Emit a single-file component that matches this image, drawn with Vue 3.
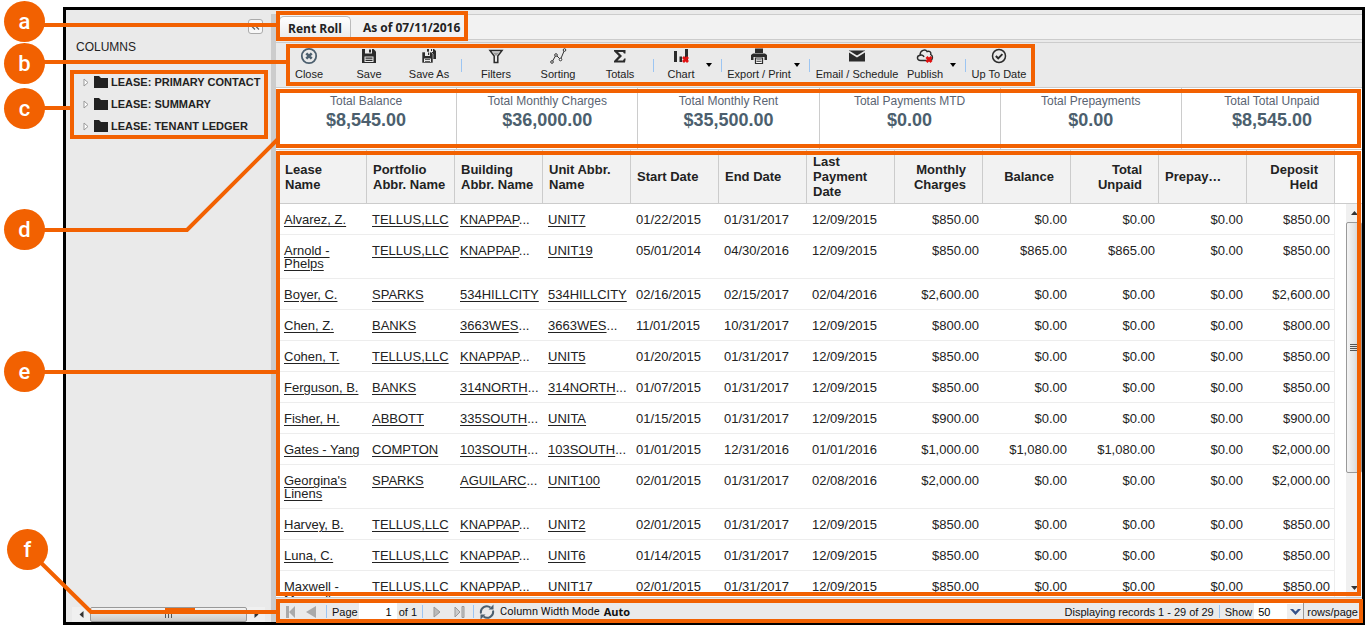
<template>
  <div class="page">
    <div class="frame">
      <aside class="sidebar">
        <button class="collapse" type="button" aria-label="Collapse columns">
          <svg width="9" height="7" viewBox="0 0 9 7"><path d="M4 0.5 1 3.5l3 3M8 0.5 5 3.5l3 3" fill="none" stroke="#666" stroke-width="1.3" /></svg>
        </button>
        <h2 class="sidebar-title">COLUMNS</h2>
        <ul class="tree">
          <li v-for="folder in folders" :key="folder">
            <svg class="twisty" width="6" height="9" viewBox="0 0 6 9"><path d="M1 1v7l4-3.5z" fill="#fff" stroke="#999" /></svg>
            <svg class="folder" width="14" height="12" viewBox="0 0 14 12"><path d="M0 0h5l2 2h7v10H0z" fill="#222" /></svg>
            <span>{{ folder }}</span>
          </li>
          <i class="callout callout-c"></i>
        </ul>
        <div class="hscroll">
          <span class="hscroll-btn"><svg width="5" height="7" viewBox="0 0 5 7"><path d="M4.500 0v7L0.500 3.500z" fill="#333" /></svg></span>
          <span class="hscroll-thumb"><b></b><b></b><b></b></span>
          <span class="hscroll-btn"><svg width="5" height="7" viewBox="0 0 5 7"><path d="M0.500 0v7l4-3.500z" fill="#333" /></svg></span>
        </div>
      </aside>

      <div class="splitter"></div>

      <main class="main">
        <nav class="tabs">
          <div class="tab-group">
            <button class="tab active" type="button">Rent Roll</button>
            <button class="tab" type="button">As of 07/11/2016</button>
            <i class="callout callout-a"></i>
          </div>
        </nav>

        <div class="toolbar">
          <div class="tools">
            <template v-for="tool in tools" :key="tool.label">
              <button class="tool" :class="tool.size" type="button">
                <svg class="tool-icon" width="18" height="18" viewBox="0 0 18 18" v-html="icons[tool.icon]"></svg>
                <span>{{ tool.label }}</span>
              </button>
              <span v-if="tool.menu" class="arrow"></span>
              <span v-if="tool.sep" class="sep"></span>
            </template>
            <i class="callout callout-b"></i>
          </div>
        </div>

        <section class="summary">
          <div v-for="item in totals" :key="item.label" class="total">
            <div class="total-label">{{ item.label }}</div>
            <div class="total-value">{{ item.value }}</div>
          </div>
          <i class="callout callout-d"></i>
        </section>

        <section class="grid">
          <div class="table-wrap">
            <table>
              <thead>
                <tr>
                  <th v-for="col in columns" :key="col.label" :class="{ num: col.num }">{{ col.label }}</th>
                </tr>
              </thead>
              <tbody>
                <tr v-for="row in rows" :key="row[0]">
                  <td v-for="(cell, i) in row" :key="i" :class="{ num: i > 6 }">
                    <template v-if="i < 4"><a href="#">{{ cell.replace('...', '') }}</a>{{ cell.endsWith('...') ? '...' : '' }}</template>
                    <template v-else>{{ cell }}</template>
                  </td>
                </tr>
              </tbody>
            </table>
          </div>
          <div class="gutter">
            <div class="gutter-head"></div>
            <div class="vscroll">
              <span class="vscroll-btn"><svg width="7" height="4" viewBox="0 0 7 4"><path d="M0 4h7L3.500 0z" fill="#333" /></svg></span>
              <span class="vscroll-thumb"><b></b><b></b><b></b><b></b></span>
              <span class="vscroll-space"></span>
              <span class="vscroll-btn"><svg width="7" height="4" viewBox="0 0 7 4"><path d="M0 0h7L3.500 4z" fill="#333" /></svg></span>
            </div>
          </div>
          <i class="callout callout-e"></i>
        </section>

        <footer class="pager">
          <button class="nav" type="button" aria-label="First page"><svg width="9" height="12" viewBox="0 0 9 12"><path d="M0 0h3v12H0zM9 0v12L3 6z" fill="#aaa" /></svg></button>
          <button class="nav nav-prev" type="button" aria-label="Previous page"><svg width="10" height="12" viewBox="0 0 10 12"><path d="M10 0v12L0 6z" fill="#aaa" /></svg></button>
          <span class="sep"></span>
          <label for="page">Page</label>
          <input id="page" v-model="page" type="text" />
          <span>of 1</span>
          <span class="sep"></span>
          <button class="nav nav-next" type="button" aria-label="Next page"><svg width="8" height="12" viewBox="0 0 8 12"><path d="M1 1v10l6-5z" fill="#bbb" stroke="#999" /></svg></button>
          <button class="nav nav-last" type="button" aria-label="Last page"><svg width="11" height="12" viewBox="0 0 11 12"><path d="M1 1v10l5-5zM8 .5h2v11H8z" fill="#ccc" stroke="#999" /></svg></button>
          <span class="sep"></span>
          <button class="nav" type="button" aria-label="Refresh">
            <svg width="16" height="16" viewBox="0 0 16 16">
              <path d="M2 9.500A6 6 0 0 1 11.500 3.500M14 6.500A6 6 0 0 1 4.500 12.500" fill="none" stroke="#4c5f6e" stroke-width="2" />
              <path d="M9.500 5.500h5V0.500zM6.500 10.500h-5v5z" fill="#4c5f6e" />
            </svg>
          </button>
          <span class="mode">Column Width Mode</span>
          <b class="auto">Auto</b>
          <span class="displaying">Displaying records 1 - 29 of 29</span>
          <span class="sep"></span>
          <label for="size">Show</label>
          <span class="size">
            <select id="size" v-model="size"><option>50</option></select>
            <svg width="16" height="16" viewBox="0 0 16 16"><path d="M3 5h3l2.500 2.500L11 5h3L8.500 11z" fill="#35518a" /></svg>
          </span>
          <span>rows/page</span>
          <i class="callout callout-f"></i>
        </footer>
      </main>
    </div>

    <svg class="connectors" width="290" height="625" viewBox="0 0 290 625">
      <g fill="none" stroke="#f26101" stroke-width="4">
        <path d="M24 25H277M24 62H287M24 108H71M24 230H187L278 139M24 372H277M27 549L91 612H277" />
      </g>
      <path d="M165 608h30v5h-30z" fill="#f26101" />
    </svg>
    <span v-for="m in markers" :key="m" class="marker" :class="'marker-' + m">{{ m }}</span>
  </div>
</template>

<script setup>
import { ref } from 'vue'

const page = ref('1')
const size = ref('50')

const markers = ['a', 'b', 'c', 'd', 'e', 'f']

const folders = ['LEASE: PRIMARY CONTACT', 'LEASE: SUMMARY', 'LEASE: TENANT LEDGER']

const tools = [
  { label: 'Close', icon: 'close', size: 'w60' },
  { label: 'Save', icon: 'save', size: 'w60' },
  { label: 'Save As', icon: 'saveAs', size: 'w60', sep: true },
  { label: 'Filters', icon: 'filter', size: 'w62' },
  { label: 'Sorting', icon: 'sort', size: 'w62' },
  { label: 'Totals', icon: 'sigma', size: 'w62', sep: true },
  { label: 'Chart', icon: 'chart', size: 'w48', menu: true, sep: true },
  { label: 'Export / Print', icon: 'print', size: 'w68', menu: true, sep: true },
  { label: 'Email / Schedule', icon: 'mail', size: 'w88' },
  { label: 'Publish', icon: 'cloud', size: 'w48', menu: true, sep: true },
  { label: 'Up To Date', icon: 'check', size: 'w60' }
]

const redX = '<path d="M9.500 10l5 5M14.500 10l-5 5" stroke="#e01010" stroke-width="2.800" fill="none"/>'

const icons = {
  close: '<circle cx="9" cy="9" r="7.200" fill="none" stroke="#4c5f6e" stroke-width="1.800"/><path d="M6.300 6.300l5.400 5.400M11.700 6.300l-5.400 5.400" stroke="#4c5f6e" stroke-width="2.600"/>',
  save: '<path d="M2 2h11.500L16 4.500V16H2z" fill="#2b2b2b"/><path d="M5 2h7v4.500H5zM4.500 9.500h9V15h-9z" fill="#eaeaea"/><path d="M9 2.500h2v3H9zM5.500 10.500h7v1.200h-7zM5.500 12.800h7V14h-7z" fill="#2b2b2b"/>',
  saveAs: '<path d="M7 2h7l2 2v8H7z" fill="#2b2b2b"/><path d="M9 2h4v3H9z" fill="#eaeaea"/><path d="M11 2h1v2h-1z" fill="#2b2b2b"/><path d="M2 5h9l2 2v9H2z" fill="#2b2b2b" stroke="#eaeaea" stroke-width=".6"/><path d="M5 5h5v4H5zM4 11.500h7V15H4z" fill="#eaeaea"/><path d="M8 5.500h1.200v2.500H8zM5 12.300h5v.8H5zM5 14h5v.8H5z" fill="#2b2b2b"/>',
  filter: '<path d="M3 3.500h12L10.800 9v6.500H7.200V9z" fill="none" stroke="#2b2b2b" stroke-width="1.500"/><path d="M5.500 5.500h7L9 9z" fill="#999"/>',
  sort: '<path d="M3 15L7 8l4.500 4.500L15.500 3" fill="none" stroke="#333" stroke-width="1"/><g fill="#fff" stroke="#333"><circle cx="3" cy="15" r="1.300"/><circle cx="7" cy="8" r="1.300"/><circle cx="11.500" cy="12.500" r="1.300"/><circle cx="15.500" cy="3" r="1.300"/></g>',
  sigma: '<path d="M3 3h11.500v3.500h-1.500L12 5H7l4 4-4.500 4.500H12l1.200-2h1.500L14 15.500H3V14l4.800-5L3 4.300z" fill="#2b2b2b"/>',
  chart: '<path d="M2 4h3v11H2zM7.500 9.500H10V15H7.500zM13 2h3v12h-3z" fill="#2b2b2b"/><g transform="translate(1.500 0)">' + redX + '</g>',
  print: '<path d="M5 1.500h8V6H5zM3 6.500h12l2 1.500v5h-2.500v-3h-11v3H1V8z" fill="#2b2b2b"/><path d="M5.500 11h7v5.500h-7z" fill="#fff" stroke="#2b2b2b" stroke-width="1.200"/><path d="M6.500 12.500h5v.8h-5zM6.500 14.200h5v.8h-5z" fill="#2b2b2b"/>',
  mail: '<path d="M1 3.500h16V14.500H1z" fill="#2b2b2b"/><path d="M1 4.500L9 9.500l8-5" fill="none" stroke="#eaeaea" stroke-width="1.500"/>',
  cloud: '<path d="M4.500 13.500C.5 13.500.5 8.800 4 8.300 4 3 9.500 1.800 11 4.500c2.500-1 4.500.8 3.700 3 2.800 1.500 2 6-1 6zM4 8.300c2-.8 3.500.2 4 1.700" fill="none" stroke="#2b2b2b" stroke-width="1.400"/><g transform="translate(1 0)">' + redX + '</g>',
  check: '<circle cx="9" cy="9" r="6.500" fill="none" stroke="#2b2b2b" stroke-width="1.500"/><path d="M5.800 9l2.400 2.300 4.200-4.200" fill="none" stroke="#2b2b2b" stroke-width="1.900"/>'
}

const totals = [
  { label: 'Total Balance', value: '$8,545.00' },
  { label: 'Total Monthly Charges', value: '$36,000.00' },
  { label: 'Total Monthly Rent', value: '$35,500.00' },
  { label: 'Total Payments MTD', value: '$0.00' },
  { label: 'Total Prepayments', value: '$0.00' },
  { label: 'Total Total Unpaid', value: '$8,545.00' }
]

const columns = [
  { label: 'Lease\nName' },
  { label: 'Portfolio\nAbbr. Name' },
  { label: 'Building\nAbbr. Name' },
  { label: 'Unit Abbr.\nName' },
  { label: 'Start Date' },
  { label: 'End Date' },
  { label: 'Last\nPayment\nDate' },
  { label: 'Monthly\nCharges', num: true },
  { label: 'Balance', num: true },
  { label: 'Total\nUnpaid', num: true },
  { label: 'Prepay…' },
  { label: 'Deposit\nHeld', num: true }
]

const rows = [
  ['Alvarez, Z.', 'TELLUS,LLC', 'KNAPPAP...', 'UNIT7', '01/22/2015', '01/31/2017', '12/09/2015', '$850.00', '$0.00', '$0.00', '$0.00', '$850.00'],
  ['Arnold - Phelps', 'TELLUS,LLC', 'KNAPPAP...', 'UNIT19', '05/01/2014', '04/30/2016', '12/09/2015', '$850.00', '$865.00', '$865.00', '$0.00', '$850.00'],
  ['Boyer, C.', 'SPARKS', '534HILLCITY', '534HILLCITY', '02/16/2015', '02/15/2017', '02/04/2016', '$2,600.00', '$0.00', '$0.00', '$0.00', '$2,600.00'],
  ['Chen, Z.', 'BANKS', '3663WES...', '3663WES...', '11/01/2015', '10/31/2017', '12/09/2015', '$800.00', '$0.00', '$0.00', '$0.00', '$800.00'],
  ['Cohen, T.', 'TELLUS,LLC', 'KNAPPAP...', 'UNIT5', '01/20/2015', '01/31/2017', '12/09/2015', '$850.00', '$0.00', '$0.00', '$0.00', '$850.00'],
  ['Ferguson, B.', 'BANKS', '314NORTH...', '314NORTH...', '01/07/2015', '01/31/2017', '12/09/2015', '$850.00', '$0.00', '$0.00', '$0.00', '$850.00'],
  ['Fisher, H.', 'ABBOTT', '335SOUTH...', 'UNITA', '01/15/2015', '01/31/2017', '12/09/2015', '$900.00', '$0.00', '$0.00', '$0.00', '$900.00'],
  ['Gates - Yang', 'COMPTON', '103SOUTH...', '103SOUTH...', '01/01/2015', '12/31/2016', '01/01/2016', '$1,000.00', '$1,080.00', '$1,080.00', '$0.00', '$2,000.00'],
  ["Georgina's Linens", 'SPARKS', 'AGUILARC...', 'UNIT100', '02/01/2015', '01/31/2017', '02/08/2016', '$2,000.00', '$0.00', '$0.00', '$0.00', '$2,000.00'],
  ['Harvey, B.', 'TELLUS,LLC', 'KNAPPAP...', 'UNIT2', '02/01/2015', '01/31/2017', '12/09/2015', '$850.00', '$0.00', '$0.00', '$0.00', '$850.00'],
  ['Luna, C.', 'TELLUS,LLC', 'KNAPPAP...', 'UNIT6', '01/14/2015', '01/31/2017', '12/09/2015', '$850.00', '$0.00', '$0.00', '$0.00', '$850.00'],
  ['Maxwell - Maxwell', 'TELLUS,LLC', 'KNAPPAP...', 'UNIT17', '02/01/2015', '01/31/2017', '12/09/2015', '$850.00', '$0.00', '$0.00', '$0.00', '$850.00']
]
</script>

<style>
body {
  background: #fff;
  overflow: hidden;
}
</style>

<style scoped>
* {
  box-sizing: border-box;
}

.page {
  position: relative;
  height: 100vh;
  padding: 7px 0 0 63px;
  font-family: "Liberation Sans", Arial, sans-serif;
  font-size: 13px;
  color: #222;
}

button {
  padding: 0;
  border: none;
  background: none;
  font: inherit;
  color: inherit;
}

.frame {
  display: flex;
  height: 100%;
  border: 3px solid #000;
  background: #eaeaea;
}

/* Orange outlines laid over each area */
.callout {
  position: absolute;
  border: 4px solid #f26101;
  pointer-events: none;
}
.callout-a { inset: -4px 0 -2px 0; }
.callout-b { inset: 1px -6px 1px 10px; }
.callout-c { inset: -1px 3px -2px 4px; }
.callout-d { inset: 1px 1px 1px 0; }
.callout-e { inset: 1px 1px 1px 0; }
.callout-f { inset: 1px -1px -1px 0; }

.connectors {
  position: absolute;
  top: 0;
  left: 0;
  pointer-events: none;
}

.marker {
  position: absolute;
  left: 4px;
  width: 41px;
  height: 41px;
  border-radius: 50%;
  background: #f26101;
  color: #fff;
  font-family: Roboto, sans-serif;
  font-size: 22px;
  font-weight: 500;
  line-height: 42px;
  text-align: center;
}
.marker-a { top: 1px; }
.marker-b { top: 43px; }
.marker-c { top: 88px; }
.marker-d { top: 209px; }
.marker-e { top: 351px; }
.marker-f { top: 529px; left: 7px; }

/* Sidebar */
.sidebar {
  display: flex;
  flex-direction: column;
  flex: 0 0 205px;
}

.collapse {
  display: flex;
  align-items: center;
  justify-content: center;
  align-self: flex-end;
  width: 15px;
  height: 15px;
  margin: 9px 8px 0 0;
  border: 1px solid #aaa;
  border-radius: 3px;
  background: #f8f8f8;
}

.sidebar-title {
  margin: 5px 0 0 10px;
  font-size: 12px;
  font-weight: normal;
  line-height: 16px;
}

.tree {
  position: relative;
  margin: 16px 0 0;
  padding: 0;
  list-style: none;
}

.tree li {
  display: flex;
  align-items: center;
  height: 22px;
  padding-left: 17px;
  font-size: 11px;
  font-weight: bold;
  white-space: nowrap;
}

.folder {
  margin: 0 3px 0 5px;
}

.hscroll {
  display: flex;
  height: 15px;
  margin: auto 6px 0;
  background: #f0f0f0;
}

.hscroll-btn {
  display: flex;
  align-items: center;
  justify-content: center;
  flex: 0 0 18px;
}

.hscroll-thumb {
  display: flex;
  align-items: center;
  justify-content: center;
  gap: 2px;
  flex: 1;
  border: 1px solid #999;
  border-radius: 2px;
  background: linear-gradient(#f4f4f4, #e0e0e0 50%, #c8c8c8);
}

.hscroll-thumb b {
  width: 1px;
  height: 7px;
  background: #555;
}

.splitter {
  flex: 0 0 5px;
  margin-top: 4px;
  background: #ccc;
}

/* Main column */
.main {
  display: flex;
  flex-direction: column;
  flex: 1;
  min-width: 0;
  padding-top: 4px;
}

.tabs {
  border-top: 1px solid #ccc;
  border-bottom: 1px solid #ccc;
  background: #f2f2f2;
}

.tab-group {
  position: relative;
  display: flex;
  width: max-content;
  height: 24px;
  padding: 1px 8px 0 3px;
}

.tab {
  padding: 0 0 0 12px;
  font-family: "Open Sans", Tahoma, sans-serif;
  font-size: 12px;
  font-weight: bold;
}

.tab.active {
  padding: 0 8px;
  border: 1px solid #bbb;
  border-bottom: none;
  border-radius: 5px 5px 0 0;
  background: linear-gradient(#fff, #eaeaea);
}

.toolbar {
  margin-top: 2px;
  border-top: 1px solid #ccc;
}

.tools {
  position: relative;
  display: flex;
  align-items: center;
  width: max-content;
  height: 44px;
  padding-left: 3px;
}

.tool {
  display: flex;
  flex-direction: column;
  align-items: center;
  height: 36px;
  font-size: 11px;
  line-height: 16px;
  white-space: nowrap;
}
.tool-icon { margin-bottom: 1px; }
.w48 { width: 48px; }
.w60 { width: 60px; }
.w62 { width: 62px; }
.w68 { width: 68px; }
.w88 { width: 88px; }

.arrow {
  width: 8px;
  height: 4px;
  margin-right: 6px;
  background: #000;
  clip-path: polygon(1px 0, 7px 0, 4px 4px);
}

.sep {
  width: 1px;
  height: 13px;
  margin: 0 3px 0 2px;
  background: #9cc5f2;
}

.summary {
  position: relative;
  display: flex;
  height: 63px;
  border-top: 1px solid #ccc;
  border-bottom: 1px solid #ccc;
  background: #fff;
  text-align: center;
}

.total {
  flex: 1;
  padding-top: 5px;
}

.total + .total {
  border-left: 1px solid #ccc;
}

.total-label {
  font-size: 12px;
  line-height: 16px;
  color: #5a6472;
}

.total-value {
  font-size: 18px;
  font-weight: bold;
  line-height: 22px;
  color: #4c5f6e;
}

/* Data grid */
.grid {
  position: relative;
  display: flex;
  flex: 1;
  min-height: 0;
  padding-left: 3px;
  background: #fff;
}

.table-wrap {
  flex: 1;
  overflow: hidden;
}

table {
  width: 100%;
  table-layout: fixed;
  border-collapse: separate;
  border-spacing: 0;
}

th {
  height: 54px;
  padding: 0 0 0 6px;
  border-right: 1px solid #ccc;
  border-bottom: 1px solid #ccc;
  background: #f2f2f2;
  line-height: 15px;
  text-align: left;
  white-space: pre;
}

th.num {
  padding: 0 16px 0 0;
  text-align: right;
}

td {
  padding: 9px 0 8px 5px;
  border-bottom: 1px solid #ededed;
  line-height: 13px;
  vertical-align: top;
}

td.num {
  padding: 9px 4px 8px 0;
  text-align: right;
}

td:last-child {
  border-right: 1px solid #ededed;
}

td a {
  color: inherit;
  text-underline-offset: 2px;
}

.gutter {
  display: flex;
  flex-direction: column;
  flex: 0 0 27px;
}

.gutter-head {
  height: 54px;
  border-bottom: 1px solid #ccc;
}

.vscroll {
  display: flex;
  flex-direction: column;
  flex: 1;
  width: 16px;
  margin-left: auto;
  background: #f0f0f0;
}

.vscroll-btn {
  display: flex;
  align-items: center;
  justify-content: center;
  height: 18px;
}

.vscroll-thumb {
  display: flex;
  flex-direction: column;
  align-items: center;
  justify-content: center;
  gap: 1px;
  flex: 250;
  border: 1px solid #999;
  border-radius: 2px;
  background: linear-gradient(90deg, #f4f4f4, #e4e4e4 50%, #c8c8c8);
}

.vscroll-thumb b {
  width: 8px;
  height: 1px;
  background: #555;
}

.vscroll-space {
  flex: 107;
}

/* Pager */
.pager {
  position: relative;
  display: flex;
  align-items: center;
  height: 25px;
  padding: 3px 4px 0 10px;
  border-top: 1px solid #ccc;
  font-size: 11px;
  color: #111;
  white-space: nowrap;
}

.pager .sep { margin: 0 5px; }
.nav { display: flex; }
.nav-prev { margin: 0 5px 0 11px; }
.nav-next { margin: 0 8px 0 5px; }
.nav-last { margin: 0 3px 0 5px; }

.pager input {
  width: 38px;
  height: 18px;
  margin: 0 2px 0 1px;
  padding: 0 5px 0 0;
  border: none;
  background: #fff;
  font: inherit;
  text-align: right;
}

.mode {
  margin: 0 4px 0 5px;
  font-family: Roboto, sans-serif;
}

.auto {
  font-family: "Open Sans", Tahoma, sans-serif;
  font-size: 11px;
}

.displaying {
  margin-left: auto;
}

.size {
  display: flex;
  align-items: center;
  height: 18px;
  margin: 0 3px 0 2px;
  border-right: 1px solid #999;
  background: #fff;
}

.size select {
  width: 33px;
  padding: 0 0 0 4px;
  border: none;
  background: none;
  font: inherit;
  appearance: none;
}

.size svg {
  background: #eee;
}
</style>
